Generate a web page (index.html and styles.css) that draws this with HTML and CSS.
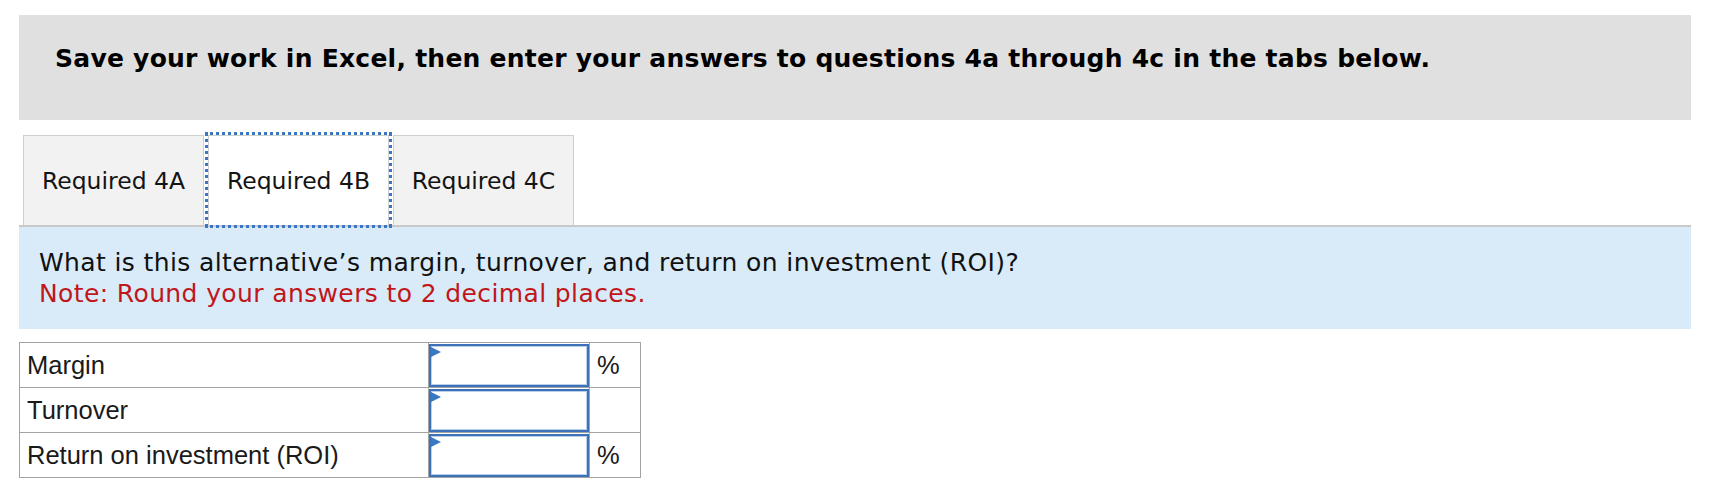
FILE: index.html
```html
<!DOCTYPE html>
<html lang="en">
<head>
<meta charset="utf-8">
<title>Required 4B</title>
<link rel="stylesheet" href="styles.css">
</head>
<body>
<div class="page">
  <div class="banner">
    <p class="banner-text">Save your work in Excel, then enter your answers to questions 4a through 4c in the tabs below.</p>
  </div>

  <div class="tabs">
    <div class="tab">Required 4A</div>
    <div class="tab active">Required 4B</div>
    <div class="tab">Required 4C</div>
  </div>

  <div class="panel">
    <p class="question">What is this alternative’s margin, turnover, and return on investment (ROI)?</p>
    <p class="note">Note: Round your answers to 2 decimal places.</p>
  </div>

  <table class="answers">
    <tr>
      <td class="label">Margin</td>
      <td class="input-cell"><div class="input"><span class="flag"></span></div></td>
      <td class="unit">%</td>
    </tr>
    <tr>
      <td class="label">Turnover</td>
      <td class="input-cell"><div class="input"><span class="flag"></span></div></td>
      <td class="unit"></td>
    </tr>
    <tr>
      <td class="label">Return on investment (ROI)</td>
      <td class="input-cell"><div class="input"><span class="flag"></span></div></td>
      <td class="unit">%</td>
    </tr>
  </table>
</div>
</body>
</html>
```

FILE: styles.css
```css
html, body {
  margin: 0;
  padding: 0;
  background: #ffffff;
}

.page {
  padding: 15px 0 0 19px;
  width: 1672px;
  font-family: "DejaVu Sans", Verdana, sans-serif;
  color: #111111;
}

.banner {
  height: 105px;
  box-sizing: border-box;
  background: #e0e0e0;
  padding: 29px 0 0 36px;
}

.banner-text {
  margin: 0;
  font-weight: bold;
  font-size: 25px;
  line-height: 29px;
  letter-spacing: 0.25px;
  color: #000000;
}

.tabs {
  display: flex;
  gap: 4px;
  margin-top: 15px;
  padding-left: 4px;
  height: 90px;
}

.tab {
  width: 181px;
  box-sizing: border-box;
  height: 90px;
  border: 1px solid #cfcfcf;
  border-bottom: none;
  background: #f2f2f2;
  display: flex;
  align-items: center;
  justify-content: center;
  font-size: 23.5px;
  color: #141414;
}

.tab.active {
  background: #ffffff;
  outline: 3px dotted #3a76c4;
  outline-offset: 0;
  position: relative;
  z-index: 1;
}

.panel {
  border-top: 2px solid #c9c9c9;
  background: #d9ebf8;
  padding: 20px 20px 20px 20px;
}

.panel p {
  margin: 0;
  font-size: 25px;
  line-height: 31px;
  letter-spacing: 0.38px;
}

.question {
  color: #111111;
}

.note {
  color: #c0161c;
}

.answers {
  margin-top: 13px;
  border-collapse: collapse;
  font-family: "Liberation Sans", Arial, sans-serif;
  font-size: 25.5px;
  color: #1a1a1a;
}

.answers td {
  border: 1px solid #a3a3a3;
  height: 44px;
  padding: 0;
  vertical-align: middle;
}

.label {
  width: 401px;
  padding-left: 7px !important;
}

.input-cell {
  width: 160px;
}

.input {
  position: relative;
  height: 43px;
  box-sizing: border-box;
  border: 2px solid #3d72b8;
  box-shadow: inset 0 0 0 1px #b9d0ec;
  background: #ffffff;
}

.flag {
  position: absolute;
  left: 0;
  top: 1px;
  width: 0;
  height: 0;
  border-top: 5px solid transparent;
  border-bottom: 5px solid transparent;
  border-left: 10px solid #3b78c4;
}

.unit {
  width: 43px;
  padding-left: 7px !important;
}
```
